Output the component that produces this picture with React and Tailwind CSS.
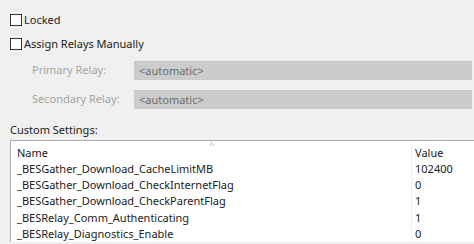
import React from 'react';

const rows = [
  ['_BESGather_Download_CacheLimitMB', '102400'],
  ['_BESGather_Download_CheckInternetFlag', '0'],
  ['_BESGather_Download_CheckParentFlag', '1'],
  ['_BESRelay_Comm_Authenticating', '1'],
  ['_BESRelay_Diagnostics_Enable', '0'],
];

function Check({ label }) {
  return (
    <label className="flex items-center h-[20px] gap-[2px]">
      <span className="w-[12px] h-[12px] border border-[#333] bg-white" />
      <span>{label}</span>
    </label>
  );
}

function RelayField({ label }) {
  return (
    <div className="flex items-center h-[19px]">
      <span className="w-[124px] shrink-0 whitespace-nowrap pl-[22px] text-[#a3a3a3]">{label}</span>
      <div className="flex-1 h-full bg-[#cccccc] border-t border-[#c4c4c4] pl-[5px] flex items-center text-[#6d6d6d]">
        &lt;automatic&gt;
      </div>
    </div>
  );
}

export default function App() {
  return (
    <div
      className="w-[474px] h-[244px] overflow-hidden bg-[#f0f0f0] text-[11px] text-[#1b1b1b] pl-[10px] pr-[2px]"
      style={{ fontFamily: '"Noto Sans", "Open Sans", sans-serif' }}
    >
      <div className="pt-[10px] flex flex-col gap-[4px]">
        <Check label="Locked" />
        <Check label="Assign Relays Manually" />
      </div>

      <div className="mt-[7px] flex flex-col gap-[10px]">
        <RelayField label="Primary Relay:" />
        <RelayField label="Secondary Relay:" />
      </div>

      <div className="mt-[11px] h-[20px] flex items-center">Custom Settings:</div>

      <div className="mr-[-4px] bg-white border-l border-t border-[#adadad] pl-[6px] pt-[4px] relative">
        <span className="absolute left-[198px] top-[-3px] text-[9px] text-[#b0b0b0]">^</span>
        <div className="flex">
          <div className="w-[394px]">
            <div className="h-[16.2px] flex items-center">Name</div>
            {rows.map(([n]) => (
              <div key={n} className="h-[16.2px] flex items-center">{n}</div>
            ))}
          </div>
          <div className="border-l border-[#f0f0f0] pl-[3px] flex-1">
            <div className="h-[16.2px] flex items-center">Value</div>
            {rows.map(([n, v]) => (
              <div key={n} className="h-[16.2px] flex items-center">{v}</div>
            ))}
          </div>
        </div>
      </div>
    </div>
  );
}
